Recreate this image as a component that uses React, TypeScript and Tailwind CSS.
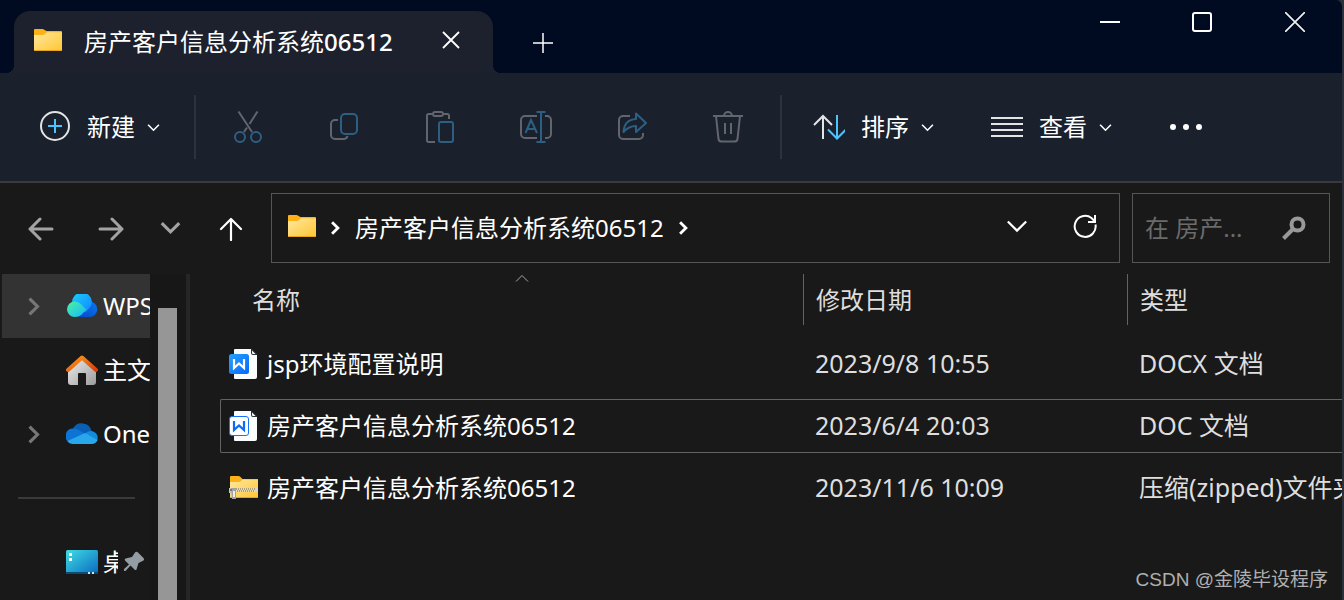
import { ReactNode } from "react";

const FONT = "font-['Noto_Sans','Noto_Sans_CJK_SC',sans-serif]";
const TITLE = "房产客户信息分析系统";
const CODE = "06512";

/* ---------- icons ---------- */

function FolderIcon() {
    return (
        <svg width="28" height="22" viewBox="0 0 28 22" className="mb-1 shrink-0">
            <defs>
                <linearGradient id="folder" x1="0" y1="0" x2="1" y2="1">
                    <stop offset="0" stopColor="#ffe89f" />
                    <stop offset="1" stopColor="#ffc632" />
                </linearGradient>
            </defs>
            <path d="M0 1a1 1 0 0 1 1-1h7.500q1 0 1.700.7L12.500 2H27a1 1 0 0 1 1 1v6H0Z" fill="#fbb117" />
            <path d="M0 6h9q1 0 1.700-.7L12 4q.5-.8 1.500-.8H28V21a1 1 0 0 1-1 1H1a1 1 0 0 1-1-1Z" fill="url(#folder)" />
            <path d="M0 21h28a1 1 0 0 1-1 1H1a1 1 0 0 1-1-1Z" fill="#eaa31d" />
        </svg>
    );
}

function ZipIcon() {
    return (
        <svg width="30" height="24" viewBox="0 0 30 24" className="shrink-0">
            <path d="M1 1a1 1 0 0 1 1-1h7.500q1 0 1.700.7L13.500 3H29v7H1Z" fill="#fbb117" />
            <path d="M1 6h9q1 0 1.700-.7L13 4q.5-.5 1.500-.5H29V21a1 1 0 0 1-1 1H2a1 1 0 0 1-1-1Z" fill="url(#folder)" />
            <path d="M1 21h28a1 1 0 0 1-1 1H2a1 1 0 0 1-1-1Z" fill="#eaa31d" />
            <path d="M7 12h20v4H7z" fill="#eadcb4" />
            <path d="M7 13h19" stroke="#6e6248" strokeDasharray="1 1" />
            <path d="M8 15h18" stroke="#6e6248" strokeDasharray="1 1" />
            <path d="M26 12h3v4h-3z" fill="#d4d4d4" />
            <path d="M0 12h7v5H0z" fill="#c4c4c4" />
            <path d="M2 12h5v11H3z" fill="#a3a3a3" />
            <path d="M4 15h2v6H4z" fill="#ededed" />
            <path d="M1 13h2v2H1z" fill="#777" />
        </svg>
    );
}

function DocIcon({ filled }: { filled?: boolean }) {
    return (
        <svg width="30" height="32" viewBox="0 0 30 32" className="shrink-0">
            <defs>
                <linearGradient id="wps" x1="0" y1="0" x2="1" y2="1">
                    <stop offset="0" stopColor="#25a3fa" />
                    <stop offset="1" stopColor="#0a66ff" />
                </linearGradient>
            </defs>
            <path d="M6 1h16l6 6v22a2 2 0 0 1-2 2H6a1 1 0 0 1-1-1V2a1 1 0 0 1 1-1Z" fill="#fbfcfe" />
            <path d="M22 0l7 7h-5a2 2 0 0 1-2-2Z" fill="#2b2f36" />
            <path d="M23 2.500l3.500 3.500H24a1 1 0 0 1-1-1Z" fill="#fff" />
            {filled ? (
                <rect x="0" y="6" width="20" height="20" rx="2.500" fill="url(#wps)" />
            ) : (
                <rect x="0.500" y="6.500" width="19" height="19" rx="2.500" fill="#fff" stroke="#1673f5" />
            )}
            <path d="M5 11v9l5-4.500 5 4.500v-9" fill="none" stroke={filled ? "#fff" : "#1068f5"} strokeWidth="2.200" />
        </svg>
    );
}

function Chevron({ dir, size, width = 1.5 }: { dir: "down" | "right"; size: number; width?: number }) {
    return (
        <svg width={size} height={size} viewBox="0 0 12 12" fill="none" stroke="currentColor" strokeWidth={width} className="shrink-0">
            <path d={dir === "down" ? "M1 3.500 6 8.500 11 3.500" : "M3.500 1 8.500 6 3.500 11"} />
        </svg>
    );
}

function Glyph({ children }: { children: ReactNode }) {
    return (
        <svg width="32" height="32" viewBox="0 0 32 32" fill="none" strokeWidth="2" className="shrink-0">
            {children}
        </svg>
    );
}

const GREY = "#62656d";
const BLUE = "#2c5f82";

const tools = [
    {
        label: "剪切",
        icon: (
            <>
                <path d="M6.500 0.500 20 21M25.500 0.500 17.500 13M15 16.500 12 21" stroke={GREY} />
                <circle cx="8" cy="26" r="5" stroke={BLUE} />
                <circle cx="24" cy="26" r="5" stroke={BLUE} />
            </>
        ),
    },
    {
        label: "复制",
        icon: (
            <>
                <path d="M10 9H7a4 4 0 0 0-4 4v11a4 4 0 0 0 4 4h8.500a4 4 0 0 0 4-3" stroke={GREY} />
                <rect x="13" y="3" width="16" height="20" rx="4" stroke={BLUE} />
            </>
        ),
    },
    {
        label: "粘贴",
        icon: (
            <>
                <path d="M8 3H4.500A1.500 1.500 0 0 0 3 4.500v25A1.500 1.500 0 0 0 4.500 31H11M20 3h3.500A1.500 1.500 0 0 1 25 4.500V8" stroke={GREY} />
                <rect x="9" y="1" width="10" height="4" rx="2" stroke={GREY} />
                <rect x="15" y="11" width="14" height="20" rx="2" stroke={BLUE} />
            </>
        ),
    },
    {
        label: "重命名",
        icon: (
            <>
                <path d="M17 5H5a4 4 0 0 0-4 4v14a4 4 0 0 0 4 4h12M25 5h2a4 4 0 0 1 4 4v14a4 4 0 0 1-4 4h-2" stroke={GREY} />
                <path d="M5.500 22 11 9l6 13M7.500 18h7.500M21 1v30M16.500 1h9M16.500 31h9" stroke={BLUE} />
            </>
        ),
    },
    {
        label: "共享",
        icon: (
            <>
                <path d="M14 5H7a4 4 0 0 0-4 4v15a4 4 0 0 0 4 4h16a4 4 0 0 0 4-4v-2" stroke={GREY} />
                <path d="M20 2.500 30 12l-10 9v-6C15 15 11 17 7.500 21 8 13 12 8.500 20 8Z" stroke={BLUE} strokeLinejoin="round" />
            </>
        ),
    },
    {
        label: "删除",
        icon: (
            <path d="M1 5h30M4 5l2.500 23a3 3 0 0 0 3 2.500h13a3 3 0 0 0 3-2.500L28 5M12 5a4 4 0 0 1 8 0M13 12v11M19 12v11" stroke={GREY} />
        ),
    },
];

function WpsCloud() {
    return (
        <svg width="32" height="24" viewBox="0 0 32 24" className="shrink-0">
            <defs>
                <linearGradient id="cloudLeft" x1="0" y1="0" x2="1" y2="1">
                    <stop offset="0" stopColor="#4df3a0" />
                    <stop offset="1" stopColor="#11b7ff" />
                </linearGradient>
                <linearGradient id="cloudTop" x1="0" y1="0" x2="1" y2="1">
                    <stop offset="0" stopColor="#17cffb" />
                    <stop offset="1" stopColor="#1583ff" />
                </linearGradient>
                <linearGradient id="cloudRight" x1="1" y1="0" x2="0" y2="1">
                    <stop offset="0" stopColor="#0a78f0" />
                    <stop offset="1" stopColor="#0648c8" />
                </linearGradient>
            </defs>
            <path d="M23.500 7.500a7.750 7.750 0 0 1 0 15.500H13l3-9Z" fill="url(#cloudRight)" />
            <path d="M6 9A10 10 0 0 1 26 8q-.5 4-3.500 7l-3.500 3.500Z" fill="url(#cloudTop)" />
            <path d="M8.750 7.500q3.500 0 6 2.500l5.500 5.500-4.500 5Q13 23 8.750 23a7.750 7.750 0 0 1 0-15.500Z" fill="url(#cloudLeft)" />
        </svg>
    );
}

function HomeIcon() {
    return (
        <svg width="32" height="32" viewBox="0 0 32 32" className="shrink-0">
            <defs>
                <linearGradient id="roof" x1="0" y1="0" x2="1" y2="1">
                    <stop offset="0" stopColor="#ff9a1c" />
                    <stop offset="1" stopColor="#d8400a" />
                </linearGradient>
                <linearGradient id="wall" x1="0" y1="0" x2="1" y2="1">
                    <stop offset="0" stopColor="#eee" />
                    <stop offset="1" stopColor="#9c9c9c" />
                </linearGradient>
            </defs>
            <path d="M16 4 2 17v11a3 3 0 0 0 3 3h7V20a1 1 0 0 1 1-1h6a1 1 0 0 1 1 1v11h7a3 3 0 0 0 3-3V17Z" fill="url(#wall)" />
            <path d="M2 16 16 3.500 30 16" fill="none" stroke="url(#roof)" strokeWidth="4" strokeLinecap="round" strokeLinejoin="round" />
        </svg>
    );
}

function OneDriveIcon() {
    return (
        <svg width="32" height="22" viewBox="0 0 32 22" className="shrink-0">
            <path d="M7 5.500A10 10 0 0 1 25.500 8L20 15Z" fill="#0a5fb4" />
            <path d="M7.500 5.500q3 0 6 2L21 12 3 19.500A7.600 7.600 0 0 1 7.500 5.500Z" fill="#0b74d4" />
            <path d="M19 10.500q3-3 6.500-2.500A7 7 0 0 1 31 18Z" fill="#128bdd" />
            <path d="M1.500 18 19 10l12.500 7q-1.500 4-6 4H7q-4 0-5.500-3Z" fill="#28a8ea" />
        </svg>
    );
}

function DesktopIcon() {
    return (
        <svg width="32" height="24" viewBox="0 0 32 24" className="shrink-0">
            <defs>
                <linearGradient id="desk" x1="0" y1="0" x2="1" y2="1">
                    <stop offset="0" stopColor="#3fdde4" />
                    <stop offset="1" stopColor="#0a69c0" />
                </linearGradient>
            </defs>
            <rect width="32" height="24" rx="1.500" fill="url(#desk)" />
            <path d="M0 22h32v.5a1.500 1.500 0 0 1-1.500 1.500h-29A1.500 1.500 0 0 1 0 22.500Z" fill="#0b4a75" />
            <path d="M3 3h3v3H3zM3 8h3v3H3z" fill="#fff" />
            <path d="M22 22h2v2h-2zM26 22h2v2h-2z" fill="#cfe4f3" />
        </svg>
    );
}

function PinIcon() {
    return (
        <svg width="22" height="22" viewBox="0 0 22 22" className="shrink-0">
            <path d="M12 1.500q1.500-1.500 3 0l5.500 5.500q1.500 2-1 3l-4 2-2 6.500q-1 1-2 0L7.500 14.500 2.500 20H1v-2l5-4.500-4-4q-1-1 .5-2L9 6Z" fill="#949da4" />
        </svg>
    );
}

/* ---------- window parts ---------- */

function TitleBar() {
    return (
        <header className="flex h-[73px] shrink-0 items-end bg-[#000a20] pl-[14px]">
            <div className="relative flex h-[62px] w-[479px] items-center rounded-t-2xl bg-[#1c212d] pl-5 pr-8">
                {/* flared corners under the tab */}
                <span className="absolute -left-2 bottom-0 size-2 bg-[radial-gradient(circle_at_0_0,#000a20_8px,#1c212d_8px)]" />
                <span className="absolute -right-2 bottom-0 size-2 bg-[radial-gradient(circle_at_100%_0,#000a20_8px,#1c212d_8px)]" />
                <FolderIcon />
                <h1 className="ml-[22px] flex-1 whitespace-nowrap text-2xl">
                    {TITLE}
                    <span className="font-medium">{CODE}</span>
                </h1>
                <button aria-label="关闭标签页" className="mb-1">
                    <svg width="20" height="20" viewBox="0 0 20 20" stroke="#fff" strokeWidth="1.800">
                        <path d="M2 2l16 16M18 2 2 18" />
                    </svg>
                </button>
            </div>
            <button aria-label="新建标签页" className="mb-5 ml-10">
                <svg width="20" height="20" viewBox="0 0 20 20" stroke="#fff" strokeWidth="1.500">
                    <path d="M10 0v20M0 10h20" />
                </svg>
            </button>
            <div className="ml-auto flex self-start">
                <button aria-label="最小化" className="flex h-11 w-[92px] items-center justify-center">
                    <span className="h-[2px] w-5 bg-white" />
                </button>
                <button aria-label="最大化" className="flex h-11 w-[92px] items-center justify-center">
                    <span className="size-5 rounded-[3px] border-2 border-white" />
                </button>
                <button aria-label="关闭" className="flex h-11 w-[94px] items-center justify-center">
                    <svg width="20" height="20" viewBox="0 0 20 20" stroke="#f0f0f0" strokeWidth="1.700">
                        <path d="M0 0l20 20M20 0 0 20" />
                    </svg>
                </button>
            </div>
        </header>
    );
}

function Toolbar() {
    return (
        <div className="flex h-[110px] shrink-0 items-center border-b-2 border-[#3a3a3d] bg-[#1b202d] text-2xl">
            <button className="flex w-[194px] items-center pl-[39px]">
                <Glyph>
                    <circle cx="16" cy="15" r="14" stroke="#e3e4e6" />
                    <path d="M16 8v14M9 15h14" stroke="#4cc2ff" />
                </Glyph>
                <span className="ml-4 mr-3">新建</span>
                <Chevron dir="down" size={13} />
            </button>
            <span className="h-16 w-[2px] bg-[#2e323e]" />
            <div className="flex px-1">
                {tools.map((tool) => (
                    <button key={tool.label} aria-label={tool.label} disabled className="flex w-24 justify-center">
                        <Glyph>{tool.icon}</Glyph>
                    </button>
                ))}
            </div>
            <span className="h-16 w-[2px] bg-[#2e323e]" />
            <button className="ml-[31px] flex items-center">
                <Glyph>
                    <path d="M10 28V5M1 14l9-9 9 9" stroke="#e3e4e6" />
                    <path d="M24 4v23M15 18.500l9 9 9-9" stroke="#4cc2ff" />
                </Glyph>
                <span className="ml-4 mr-3">排序</span>
                <Chevron dir="down" size={13} />
            </button>
            <button className="ml-[57px] flex items-center">
                <Glyph>
                    <path d="M0 7h32M0 13h32M0 19h32M0 25h32" stroke="#e3e4e6" />
                </Glyph>
                <span className="ml-4 mr-3">查看</span>
                <Chevron dir="down" size={13} />
            </button>
            <button aria-label="更多" className="ml-[58px]">
                <Glyph>
                    <path d="M0 16a3 3 0 1 0 6 0 3 3 0 1 0-6 0M13 16a3 3 0 1 0 6 0 3 3 0 1 0-6 0M26 16a3 3 0 1 0 6 0 3 3 0 1 0-6 0" fill="#fff" />
                </Glyph>
            </button>
        </div>
    );
}

function NavBar() {
    return (
        <nav className="flex h-[91px] shrink-0 items-center pb-[2px] pr-3 text-2xl">
            <div className="flex w-[271px] shrink-0 items-center pl-7">
                <button aria-label="后退" className="text-[#a3a3a3]">
                    <svg width="26" height="26" viewBox="0 0 26 26" fill="none" stroke="currentColor" strokeWidth="3" strokeLinecap="round" strokeLinejoin="round">
                        <path d="M24 14H2M12 4 2 14l10 10" />
                    </svg>
                </button>
                <button aria-label="前进" className="ml-11 text-[#a3a3a3]">
                    <svg width="26" height="26" viewBox="0 0 26 26" fill="none" stroke="currentColor" strokeWidth="3" strokeLinecap="round" strokeLinejoin="round">
                        <path d="M2 14h22M14 4l10 10-10 10" />
                    </svg>
                </button>
                <button aria-label="最近浏览的位置" className="ml-9 text-[#a3a3a3]">
                    <Chevron dir="down" size={21} width={1.8} />
                </button>
                <button aria-label="向上" className="ml-[37px]">
                    <svg width="26" height="26" viewBox="0 0 26 26" fill="none" stroke="#fff" strokeWidth="2.200" strokeLinecap="round" strokeLinejoin="round">
                        <path d="M13 25V4M3 14 13 4l10 10" />
                    </svg>
                </button>
            </div>
            <div className="flex h-[70px] flex-1 items-center border border-[#555] pl-4 pr-[22px]">
                <FolderIcon />
                <span className="ml-3"><Chevron dir="right" size={14} width={2.4} /></span>
                <span className="ml-[13px] whitespace-nowrap">{TITLE}{CODE}</span>
                <span className="ml-3"><Chevron dir="right" size={14} width={2.4} /></span>
                <button aria-label="以前的位置" className="mb-1 ml-auto">
                    <Chevron dir="down" size={22} width={1.2} />
                </button>
                <button aria-label="刷新" className="mb-1 ml-[45px]">
                    <svg width="24" height="24" viewBox="0 0 24 24" fill="none" stroke="#fff" strokeWidth="2">
                        <path d="M22.500 10.500A10.500 10.500 0 1 1 18.500 4L22 7.500M22 1v7h-7" />
                    </svg>
                </button>
            </div>
            <label className="ml-3 flex h-[70px] w-[198px] items-center border border-[#555] px-3">
                <input aria-label="搜索" placeholder="在 房产..." className="w-[120px] bg-transparent outline-none placeholder:text-[#6b6b6b]" />
                <svg width="24" height="24" viewBox="0 0 24 24" fill="none" stroke="#999" strokeWidth="4" className="ml-[17px]">
                    <circle cx="15.500" cy="8.500" r="6" />
                    <path d="M11 13 1.500 22.500" />
                </svg>
            </label>
        </nav>
    );
}

function SideItem({ icon, label, expandable, active, pinned }: { icon: ReactNode; label: string; expandable?: boolean; active?: boolean; pinned?: boolean }) {
    return (
        <li>
            <button className={`flex h-16 w-full items-center pl-[22px] ${active ? "bg-[#333]" : ""}`}>
                <span className="w-[42px] shrink-0 text-[#777]">{expandable && <Chevron dir="right" size={19} width={2} />}</span>
                <span className="w-8 shrink-0">{icon}</span>
                <span className={`ml-[5px] overflow-hidden whitespace-nowrap text-left text-2xl ${pinned ? "w-[15px] shrink-0" : ""}`}>{label}</span>
                {pinned && <span className="ml-[5px]"><PinIcon /></span>}
            </button>
        </li>
    );
}

function Sidebar() {
    return (
        <aside className="flex w-[190px] shrink-0 overflow-hidden border-r-4 border-[#262626] pl-[2px]">
            <ul className="w-[148px] shrink-0 overflow-hidden">
                <SideItem icon={<WpsCloud />} label="WPS云盘" expandable active />
                <SideItem icon={<HomeIcon />} label="主文件夹" />
                <SideItem icon={<OneDriveIcon />} label="OneDrive" expandable />
                <li className="flex h-16 items-center pl-4 pr-[15px]">
                    <hr className="w-full border-t-2 border-[#3a3a3a]" />
                </li>
                <SideItem icon={<DesktopIcon />} label="桌面" pinned />
            </ul>
            <div className="w-9 bg-[#171717] pl-2 pt-[34px]">
                <div className="h-full w-[19px] bg-[#969696]" />
            </div>
        </aside>
    );
}

const files = [
    { name: "jsp环境配置说明", date: "2023/9/8 10:55", type: "DOCX 文档", icon: <DocIcon filled /> },
    { name: TITLE + CODE, date: "2023/6/4 20:03", type: "DOC 文档", icon: <DocIcon />, focused: true },
    { name: TITLE + CODE, date: "2023/11/6 10:09", type: "压缩(zipped)文件夹", icon: <ZipIcon /> },
];

function FileTable() {
    return (
        <main className="min-w-0 flex-1 overflow-hidden pl-[30px]">
            <table className="w-full table-fixed border-collapse whitespace-nowrap text-left text-2xl">
                <colgroup>
                    <col className="w-[583px]" />
                    <col className="w-[324px]" />
                    <col />
                </colgroup>
                <thead className="text-[#dedede]">
                    <tr>
                        <th className="p-0 pb-2 font-normal">
                            <div className="relative ml-5 flex h-[51px] items-center pl-3">
                                <svg width="14" height="8" viewBox="0 0 14 8" fill="none" stroke="#aaa" className="absolute inset-x-0 top-0 mx-auto">
                                    <path d="M1 7.500 7 1.500l6 6" />
                                </svg>
                                名称
                            </div>
                        </th>
                        <th className="p-0 pb-2 font-normal">
                            <div className="flex h-[51px] items-center border-l border-[#636363] pl-3">修改日期</div>
                        </th>
                        <th className="p-0 pb-2 font-normal">
                            <div className="flex h-[51px] items-center border-l border-[#636363] pl-3">类型</div>
                        </th>
                    </tr>
                </thead>
                <tbody>
                    {files.map((file) => {
                        const line = file.focused ? "border-[#636363]" : "border-transparent";
                        return (
                            <tr key={file.type}>
                                <td className="p-0 py-1">
                                    <div className={`flex h-[54px] items-center gap-2 rounded-l-[2px] border-y border-l pl-2 ${line}`}>
                                        {file.icon}
                                        {file.name}
                                    </div>
                                </td>
                                <td className="p-0 py-1">
                                    <div className={`flex h-[54px] items-center border-y pl-3 text-[25px] text-[#dedede] ${line}`}>{file.date}</div>
                                </td>
                                <td className="p-0 py-1">
                                    <div className={`flex h-[54px] items-center border-y pl-3 text-[25px] text-[#dedede] ${line}`}>{file.type}</div>
                                </td>
                            </tr>
                        );
                    })}
                </tbody>
            </table>
        </main>
    );
}

export default function App() {
    return (
        <div className="bg-[#2c303b]">
            <div className={`relative flex h-screen flex-col overflow-hidden rounded-tr-lg border-r-2 border-[#2c303b] bg-[#191919] text-white ${FONT}`}>
                <TitleBar />
                <Toolbar />
                <NavBar />
                <div className="flex min-h-0 flex-1">
                    <Sidebar />
                    <FileTable />
                </div>
                <span className="absolute bottom-1 right-[14px] font-['Liberation_Sans','Noto_Sans_CJK_SC',sans-serif] text-[19px] leading-8 text-[#b0b0b0]">CSDN @金陵毕设程序</span>
            </div>
        </div>
    );
}
